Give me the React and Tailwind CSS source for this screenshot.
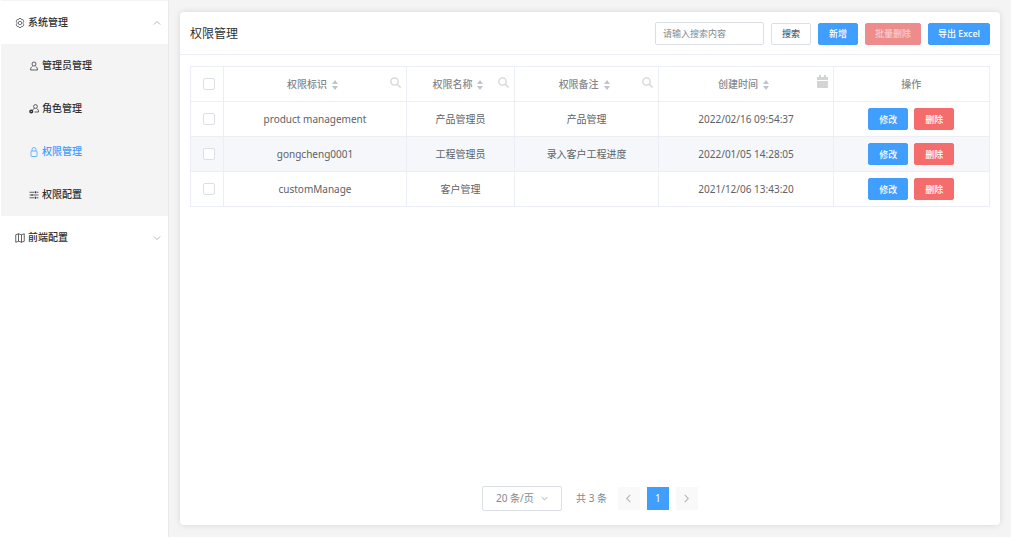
import React, { useState } from 'react';

const ROWS = [
  { id: 1, key: 'product management', name: '产品管理员', remark: '产品管理', created: '2022/02/16 09:54:37' },
  { id: 2, key: 'gongcheng0001', name: '工程管理员', remark: '录入客户工程进度', created: '2022/01/05 14:28:05' },
  { id: 3, key: 'customManage', name: '客户管理', remark: '', created: '2021/12/06 13:43:20' },
];

const COLUMNS = [
  { key: 'key', title: '权限标识', filter: 'search' },
  { key: 'name', title: '权限名称', filter: 'search' },
  { key: 'remark', title: '权限备注', filter: 'search' },
  { key: 'created', title: '创建时间', filter: 'date' },
];

const MENU = [
  { key: 'admin', label: '管理员管理', icon: UserIcon },
  { key: 'role', label: '角色管理', icon: RoleIcon },
  { key: 'permission', label: '权限管理', icon: LockIcon },
  { key: 'config', label: '权限配置', icon: SlidersIcon },
];

function Icon({ className = 'size-[10px]', children }) {
  return (
    <svg className={`shrink-0 ${className}`} viewBox="0 0 20 20" fill="none" stroke="currentColor" strokeWidth="1.5" aria-hidden="true">
      {children}
    </svg>
  );
}

function SettingIcon() {
  return (
    <Icon>
      <path
        d="M8 1h4l1 2.4 2.6-.4 2 3.4-1.400 2.100v3l1.400 2.100-2 3.400-2.600-.4L12 19H8l-1-2.400-2.600.4-2-3.400 1.400-2.100v-3L2.400 6.400l2-3.400 2.600.4z"
        strokeLinejoin="round"
        strokeWidth="1.3"
      />
      <circle cx="10" cy="10" r="3.4" strokeWidth="1.3" />
    </Icon>
  );
}

function UserIcon() {
  return (
    <Icon>
      <circle cx="10" cy="6" r="4" />
      <path d="M7 10.5C4.5 12 3 14.5 3 18h14c0-3.5-1.5-6-4-7.5" />
    </Icon>
  );
}

function RoleIcon() {
  return (
    <Icon>
      <circle cx="13" cy="5" r="3.8" />
      <path d="M10.5 9C8.5 10 7.5 11 7.2 12.5M11 16h8.2c0-3.5-1.5-5.8-3.8-7" />
      <circle cx="4.5" cy="15" r="2.6" strokeWidth="3" />
    </Icon>
  );
}

function LockIcon() {
  return (
    <Icon>
      <rect x="4" y="8" width="12" height="11" rx="1.5" />
      <path d="M6 8V5a4 4 0 0 1 8 0v3" />
    </Icon>
  );
}

function SlidersIcon() {
  return (
    <Icon>
      <path d="M1 4.5h10M15 4.5h4M1 10h3M8 10h11M1 15.5h10M15 15.5h4" />
      <path d="M13 2.5v4M6 8v4M13 13.5v4" strokeWidth="2.5" />
    </Icon>
  );
}

function MapIcon() {
  return (
    <Icon>
      <path d="M1.5 3.5 7 1.5v15l-5.5 2zM7 1.5l6 2v15l-6-2M13 3.5l5.5-2v15l-5.5 2" strokeLinejoin="round" />
    </Icon>
  );
}

function Chevron({ d, className }) {
  return (
    <Icon className={className}>
      <path d={d} strokeWidth="2.5" />
    </Icon>
  );
}

const UP = 'M2 14l8-8 8 8';
const DOWN = 'M2 6l8 8 8-8';
const LEFT = 'M14 2l-8 8 8 8';
const RIGHT = 'M6 2l8 8-8 8';

function SortIcon() {
  return (
    <svg className="mt-[2px] h-[10px] w-[6px] text-[#c0c4cc]" viewBox="0 0 6 10" fill="currentColor" aria-hidden="true">
      <path d="M3 0l3 4H0zM0 6h6l-3 4z" />
    </svg>
  );
}

function FilterIcon({ type }) {
  if (type === 'date') {
    return (
      <svg className="h-[14px] w-[11px]" viewBox="0 0 11 14" fill="currentColor" aria-hidden="true">
        <path d="M0 2h2V0h2v2h3V0h2v2h2v3H0zM0 6h11v6a1 1 0 0 1-1 1H1a1 1 0 0 1-1-1z" />
      </svg>
    );
  }
  return (
    <svg className="size-[11px]" viewBox="0 0 11 11" fill="none" stroke="currentColor" strokeWidth="1.3" aria-hidden="true">
      <circle cx="4.5" cy="4.5" r="3.7" />
      <path d="M7.2 7.2l3.4 3.4" />
    </svg>
  );
}

function Button({ variant = 'default', ...props }) {
  const styles = {
    default: 'border-[#dcdfe6] bg-white text-[#606266]',
    primary: 'border-[#409eff] bg-[#409eff] text-white',
    danger: 'border-[#f56c6c] bg-[#f56c6c] text-white',
    muted: 'border-[#ee8c8c] bg-[#ee8c8c] text-[#f8cccc]',
  };
  return (
    <button
      type="button"
      className={`h-[22px] min-w-10 rounded-xs border px-[9px] text-[9px] leading-none font-medium whitespace-nowrap ${styles[variant]}`}
      {...props}
    />
  );
}

function Checkbox(props) {
  return (
    <input
      type="checkbox"
      className="mx-auto block size-3 appearance-none rounded-xs border border-[#dcdfe6] bg-white checked:bg-[#409eff]"
      {...props}
    />
  );
}

function Sidebar() {
  const [active, setActive] = useState('permission');
  const [open, setOpen] = useState(true);

  return (
    <nav className="w-[168px] shrink-0 border-t border-r border-t-[#f4f4f4] border-r-[#e9e9e9] bg-white text-[10px] text-[#303133]">
      <button
        type="button"
        aria-expanded={open}
        onClick={() => setOpen(!open)}
        className="flex h-[43px] w-full items-center gap-[3px] pr-[7px] pl-[14px] font-medium"
      >
        <SettingIcon />
        <span>系统管理</span>
        <Chevron d={open ? UP : DOWN} className="ml-auto size-2 text-[#b4b7bd]" />
      </button>
      {open && (
        <ul className="bg-[#f4f4f4]">
          {MENU.map((item) => (
            <li key={item.key}>
              <a
                href={`#${item.key}`}
                onClick={() => setActive(item.key)}
                className={`flex h-[43px] items-center gap-[3px] pl-7 font-medium ${active === item.key ? 'text-[#409eff]' : ''}`}
              >
                <item.icon />
                <span>{item.label}</span>
              </a>
            </li>
          ))}
        </ul>
      )}
      <button type="button" className="flex h-[43px] w-full items-center gap-[3px] pr-[7px] pl-[14px] font-medium">
        <MapIcon />
        <span>前端配置</span>
        <Chevron d={DOWN} className="ml-auto size-2 text-[#b4b7bd]" />
      </button>
    </nav>
  );
}

function PermissionTable() {
  const [selected, setSelected] = useState([]);

  const toggle = (id) => {
    setSelected(selected.includes(id) ? selected.filter((s) => s !== id) : [...selected, id]);
  };

  return (
    <table className="w-full table-fixed border-collapse text-center text-[10px] text-[#606266]">
      <colgroup>
        <col className="w-[33px]" />
        <col className="w-[22.9%]" />
        <col className="w-[13.5%]" />
        <col className="w-[18.1%]" />
        <col className="w-[21.8%]" />
        <col />
      </colgroup>
      <thead className="text-[#85888e]">
        <tr className="h-[35px]">
          <th className="border border-[#ebeef5] py-0 pr-0 pl-[3px]">
            <Checkbox
              aria-label="全选"
              checked={selected.length === ROWS.length}
              onChange={(e) => setSelected(e.target.checked ? ROWS.map((r) => r.id) : [])}
            />
          </th>
          {COLUMNS.map((col) => (
            <th key={col.key} className="border border-[#ebeef5] py-0 pr-[5px] pl-0 font-medium">
              <div className="grid grid-cols-[1fr_auto_1fr] items-center">
                <span />
                <button type="button" className="flex items-center gap-[5px]">
                  {col.title}
                  <SortIcon />
                </button>
                <button type="button" aria-label={`筛选${col.title}`} className="justify-self-end pb-1 text-[#d3d4d6]">
                  <FilterIcon type={col.filter} />
                </button>
              </div>
            </th>
          ))}
          <th className="border border-[#ebeef5] p-0 font-medium">操作</th>
        </tr>
      </thead>
      <tbody>
        {ROWS.map((row) => (
          <tr key={row.id} className="h-[35px] even:bg-[#f5f7fa]">
            <td className="border border-[#ebeef5] py-0 pr-0 pl-[3px]">
              <Checkbox aria-label={row.key} checked={selected.includes(row.id)} onChange={() => toggle(row.id)} />
            </td>
            {COLUMNS.map((col) => (
              <td key={col.key} className="border border-[#ebeef5] p-0">{row[col.key]}</td>
            ))}
            <td className="border border-[#ebeef5] p-0">
              <div className="flex justify-center gap-[6px]">
                <Button variant="primary">修改</Button>
                <Button variant="danger">删除</Button>
              </div>
            </td>
          </tr>
        ))}
      </tbody>
    </table>
  );
}

function Pagination() {
  return (
    <div className="mt-auto flex items-center justify-center pb-[14px] text-[10px] text-[#85888e]">
      <div className="relative mr-[14px]">
        <select aria-label="每页条数" className="h-[25px] w-20 appearance-none rounded-xs border border-[#dcdfe6] bg-white pl-[13px]">
          <option>20 条/页</option>
          <option>50 条/页</option>
        </select>
        <Chevron d={DOWN} className="pointer-events-none absolute top-[9px] right-[14px] size-[7px] text-[#a0a3a9]" />
      </div>
      <span className="mr-[11px]">共 3 条</span>
      <div className="flex gap-[7px]">
        <button type="button" aria-label="上一页" className="grid h-[23px] w-[22px] place-items-center bg-[#f9f9f9] text-[#b4b8c0]">
          <Chevron d={LEFT} className="size-[9px]" />
        </button>
        <button type="button" className="h-[23px] w-[22px] bg-[#409eff] text-white">1</button>
        <button type="button" aria-label="下一页" className="grid h-[23px] w-[22px] place-items-center bg-[#f9f9f9] text-[#b4b8c0]">
          <Chevron d={RIGHT} className="size-[9px]" />
        </button>
      </div>
    </div>
  );
}

export default function App() {
  return (
    <div className="flex min-h-screen bg-white pr-px pb-[2px] pl-px font-['Noto_Sans','Noto_Sans_CJK_SC',sans-serif]">
      <Sidebar />
      <div className="flex min-w-0 flex-1 bg-[#f4f4f4] px-[11px] py-3">
        <main className="flex min-w-0 flex-1 flex-col rounded-sm bg-white shadow-[0_0_6px_rgba(0,0,0,0.12)]">
          <header className="flex items-center gap-[7px] border-b border-[#ebeef5] px-[10px] pt-[9px] pb-2">
            <h1 className="mr-auto pt-px text-[12px] leading-6 text-[#303133]">权限管理</h1>
            <input
              type="text"
              aria-label="搜索"
              placeholder="请输入搜索内容"
              className="h-[23px] w-[109px] rounded-xs border border-[#dcdfe6] px-[7px] text-[9px] text-[#606266] placeholder:text-[#85888e]"
            />
            <Button>搜索</Button>
            <Button variant="primary">新增</Button>
            <Button variant="muted">批量删除</Button>
            <Button variant="primary">导出 Excel</Button>
          </header>
          <section className="flex flex-1 flex-col px-[10px] pt-[11px]">
            <PermissionTable />
            <Pagination />
          </section>
        </main>
      </div>
    </div>
  );
}
